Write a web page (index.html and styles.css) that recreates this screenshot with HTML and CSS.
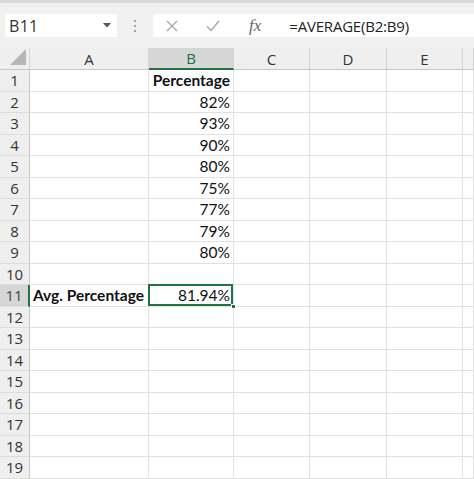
FILE: index.html
```html
<!DOCTYPE html>
<html>
<head>
<meta charset="utf-8">
<link rel="stylesheet" href="styles.css">
</head>
<body>
<div class="app">
  <div class="toolbar">
    <div class="namebox">
      <span class="name">B11</span>
      <svg class="caret" width="8" height="5" viewBox="0 0 8 5"><path d="M0 0H8L4 4.5Z" fill="#555"/></svg>
    </div>
    <div class="grip"><i></i><i></i><i></i></div>
    <div class="formula">
      <svg class="ico-x" width="12" height="12" viewBox="0 0 12 12"><path d="M1 1L11 11M11 1L1 11" stroke="#a6a6a6" stroke-width="1.3" fill="none"/></svg>
      <svg class="ico-check" width="14" height="12" viewBox="0 0 14 12"><path d="M1 6.5L5 10.5L13 1" stroke="#a6a6a6" stroke-width="1.4" fill="none"/></svg>
      <span class="fx">fx</span>
      <span class="ftext">=AVERAGE(B2:B9)</span>
    </div>
  </div>
  <div class="sheet">
    <div class="corner"><svg width="18" height="18" viewBox="0 0 18 18"><path d="M17 1V17H1Z" fill="#b7b7b7"/></svg></div>
    <div class="ch">A</div>
    <div class="ch sel">B</div>
    <div class="ch">C</div>
    <div class="ch">D</div>
    <div class="ch">E</div>
    <div class="ch"></div>

    <div class="rh">1</div><div class="c"></div><div class="c b">Percentage</div><div class="c"></div><div class="c"></div><div class="c"></div><div class="c"></div>
    <div class="rh">2</div><div class="c"></div><div class="c n">82%</div><div class="c"></div><div class="c"></div><div class="c"></div><div class="c"></div>
    <div class="rh">3</div><div class="c"></div><div class="c n">93%</div><div class="c"></div><div class="c"></div><div class="c"></div><div class="c"></div>
    <div class="rh">4</div><div class="c"></div><div class="c n">90%</div><div class="c"></div><div class="c"></div><div class="c"></div><div class="c"></div>
    <div class="rh">5</div><div class="c"></div><div class="c n">80%</div><div class="c"></div><div class="c"></div><div class="c"></div><div class="c"></div>
    <div class="rh">6</div><div class="c"></div><div class="c n">75%</div><div class="c"></div><div class="c"></div><div class="c"></div><div class="c"></div>
    <div class="rh">7</div><div class="c"></div><div class="c n">77%</div><div class="c"></div><div class="c"></div><div class="c"></div><div class="c"></div>
    <div class="rh">8</div><div class="c"></div><div class="c n">79%</div><div class="c"></div><div class="c"></div><div class="c"></div><div class="c"></div>
    <div class="rh">9</div><div class="c"></div><div class="c n">80%</div><div class="c"></div><div class="c"></div><div class="c"></div><div class="c"></div>
    <div class="rh">10</div><div class="c"></div><div class="c"></div><div class="c"></div><div class="c"></div><div class="c"></div><div class="c"></div>
    <div class="rh sel">11</div><div class="c b">Avg. Percentage</div><div class="c n active">81.94%<span class="selbox"></span><span class="handle"></span></div><div class="c"></div><div class="c"></div><div class="c"></div><div class="c"></div>
    <div class="rh">12</div><div class="c"></div><div class="c"></div><div class="c"></div><div class="c"></div><div class="c"></div><div class="c"></div>
    <div class="rh">13</div><div class="c"></div><div class="c"></div><div class="c"></div><div class="c"></div><div class="c"></div><div class="c"></div>
    <div class="rh">14</div><div class="c"></div><div class="c"></div><div class="c"></div><div class="c"></div><div class="c"></div><div class="c"></div>
    <div class="rh">15</div><div class="c"></div><div class="c"></div><div class="c"></div><div class="c"></div><div class="c"></div><div class="c"></div>
    <div class="rh">16</div><div class="c"></div><div class="c"></div><div class="c"></div><div class="c"></div><div class="c"></div><div class="c"></div>
    <div class="rh">17</div><div class="c"></div><div class="c"></div><div class="c"></div><div class="c"></div><div class="c"></div><div class="c"></div>
    <div class="rh">18</div><div class="c"></div><div class="c"></div><div class="c"></div><div class="c"></div><div class="c"></div><div class="c"></div>
    <div class="rh">19</div><div class="c"></div><div class="c"></div><div class="c"></div><div class="c"></div><div class="c"></div><div class="c"></div>
  </div>
</div>
</body>
</html>
```

FILE: styles.css
```css
html, body {
  margin: 0;
  padding: 0;
  background: #fff;
  overflow: hidden;
}
.app {
  width: 474px;
  height: 479px;
  overflow: hidden;
  font-family: "Open Sans", "Noto Sans", sans-serif;
}
.toolbar {
  height: 48px;
  box-sizing: border-box;
  background: #f1f1f1;
  border-top: 3px solid #d9d9d9;
  display: flex;
  align-items: flex-start;
  padding-top: 11px;
}
.namebox {
  margin-left: 5px;
  width: 112px;
  height: 23px;
  background: #fff;
  display: flex;
  align-items: center;
  justify-content: space-between;
  box-sizing: border-box;
  padding: 0 6px 0 4px;
}
.name {
  font-size: 16px;
  color: #333;
  letter-spacing: 0.3px;
}
.grip {
  width: 36px;
  height: 23px;
  display: flex;
  flex-direction: column;
  align-items: center;
  justify-content: center;
  gap: 3px;
}
.grip i {
  display: block;
  width: 2px;
  height: 2px;
  background: #a3a3a3;
}
.formula {
  flex: 1;
  height: 23px;
  background: #fff;
  display: flex;
  align-items: center;
}
.ico-x { margin-left: 13px; }
.ico-check { margin-left: 28px; }
.fx {
  margin-left: 29px;
  font-family: "Liberation Serif", serif;
  font-style: italic;
  font-size: 17px;
  color: #666;
}
.ftext {
  margin-left: 28px;
  font-size: 15px;
  letter-spacing: -0.2px;
  color: #222;
}
.sheet {
  display: grid;
  grid-template-columns: 30px 119px 85px 76px 77px 76px 11px;
  grid-template-rows: 22px repeat(19, 21.5px);
}
.corner {
  background: #efefef;
  border-right: 1px solid #d4d4d4;
  border-bottom: 1px solid #c6c6c6;
  display: flex;
  align-items: flex-end;
  justify-content: flex-end;
  padding: 0 2px 3px 0;
  box-sizing: border-box;
}
.ch {
  background: #efefef;
  border-right: 1px solid #d4d4d4;
  border-bottom: 1px solid #c6c6c6;
  box-sizing: border-box;
  text-align: center;
  font-size: 15px;
  line-height: 22px;
  color: #333;
}
.ch.sel {
  background: #d6d6d6;
  color: #1e6e45;
  border-bottom: 2px solid #217346;
  line-height: 21px;
}
.rh {
  background: #efefef;
  border-right: 1px solid #c6c6c6;
  border-bottom: 1px solid #dcdcdc;
  box-sizing: border-box;
  text-align: center;
  font-size: 15px;
  line-height: 21px;
  color: #333;
}
.rh.sel {
  background: #d6d6d6;
  border-right: 2px solid #217346;
  color: #444;
}
.c {
  border-right: 1px solid #e1e1e1;
  border-bottom: 1px solid #e1e1e1;
  box-sizing: border-box;
  font-family: "Lato", "Open Sans", sans-serif;
  font-size: 15.5px;
  line-height: 21px;
  color: #111;
  white-space: nowrap;
  overflow: visible;
}
.c.b {
  font-weight: 700;
  padding-left: 3px;
}
.c.n {
  text-align: right;
  padding-right: 3px;
}
.c:nth-child(7n+3).b {
  text-align: right;
  padding-right: 3px;
}
.active {
  position: relative;
}
.selbox {
  position: absolute;
  left: -1px;
  top: -1px;
  right: 0;
  bottom: 0;
  border: 2px solid #217346;
}
.handle {
  position: absolute;
  right: -3px;
  bottom: -3px;
  width: 5px;
  height: 5px;
  background: #217346;
  border: 1px solid #fff;
  box-sizing: border-box;
}
```
